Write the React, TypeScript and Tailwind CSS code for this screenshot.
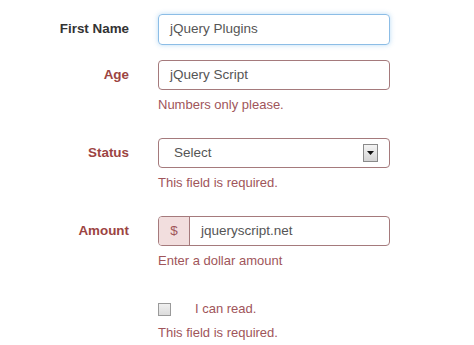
import React from "react"

const font = { fontFamily: '"Liberation Sans", Arial, sans-serif' }

function Label({ children, error }: { children: React.ReactNode; error?: boolean }) {
  return (
    <div
      className={`w-[129px] text-right text-[13.4px] font-bold ${error ? "text-[#9c4442]" : "text-[#333333]"}`}
    >
      {children}
    </div>
  )
}

function Help({ children }: { children: React.ReactNode }) {
  return <div className="ml-[158px] mt-[5px] h-[20px] text-[13px] leading-[20px] text-[#a0555a]">{children}</div>
}

export default function App() {
  return (
    <div className="h-[345px] w-[474px] bg-white pt-[14px]" style={font}>
      <div className="flex items-center gap-[29px]">
        <Label>First Name</Label>
        <div className="flex h-[31px] w-[232px] items-center rounded-[4px] border border-[#8cbde6] px-[11px] text-[13.5px] text-[#555555] shadow-[0_0_5px_rgba(102,175,233,0.45)]">
          jQuery Plugins
        </div>
      </div>

      <div className="mt-[15px] flex items-center gap-[29px]">
        <Label error>Age</Label>
        <div className="flex h-[30px] w-[232px] items-center rounded-[4px] border border-[#a57a7c] px-[11px] text-[13.5px] text-[#555555]">
          jQuery Script
        </div>
      </div>
      <Help>Numbers only please.</Help>

      <div className="mt-[23px] flex items-center gap-[29px]">
        <Label error>Status</Label>
        <div className="flex h-[30px] w-[232px] items-center justify-between rounded-[4px] border border-[#a57a7c] pl-[15px] pr-[11px] text-[13.5px] text-[#555555]">
          <span>Select</span>
          <span className="flex h-[18px] w-[15px] items-center justify-center border border-[#8a8a8a] bg-gradient-to-b from-[#f4f4f4] to-[#d4d4d4]">
            <svg width="7" height="4" viewBox="0 0 7 4">
              <path d="M0 0h7L3.5 4z" fill="#111" />
            </svg>
          </span>
        </div>
      </div>
      <Help>This field is required.</Help>

      <div className="mt-[23px] flex items-center gap-[29px]">
        <Label error>Amount</Label>
        <div className="flex h-[30px] w-[232px] overflow-hidden rounded-[4px] border border-[#a57a7c] text-[13.5px]">
          <div className="flex w-[31px] items-center justify-center border-r border-[#a57a7c] bg-[#f2dede] text-[#a0555a]">
            $
          </div>
          <div className="flex flex-1 items-center pl-[11px] text-[#555555]">jqueryscript.net</div>
        </div>
      </div>
      <Help>Enter a dollar amount</Help>

      <div className="ml-[158px] mt-[28px] flex h-[20px] items-center text-[13px] text-[#a0555a]">
        <span className="block h-[13px] w-[13px] border border-[#9a9a9a] bg-gradient-to-b from-[#f0f0f0] to-[#dcdcdc]" />
        <span className="ml-[24px]">I can read.</span>
      </div>
      <div className="ml-[158px] mt-[4px] h-[20px] text-[13px] leading-[20px] text-[#a0555a]">This field is required.</div>
    </div>
  )
}
